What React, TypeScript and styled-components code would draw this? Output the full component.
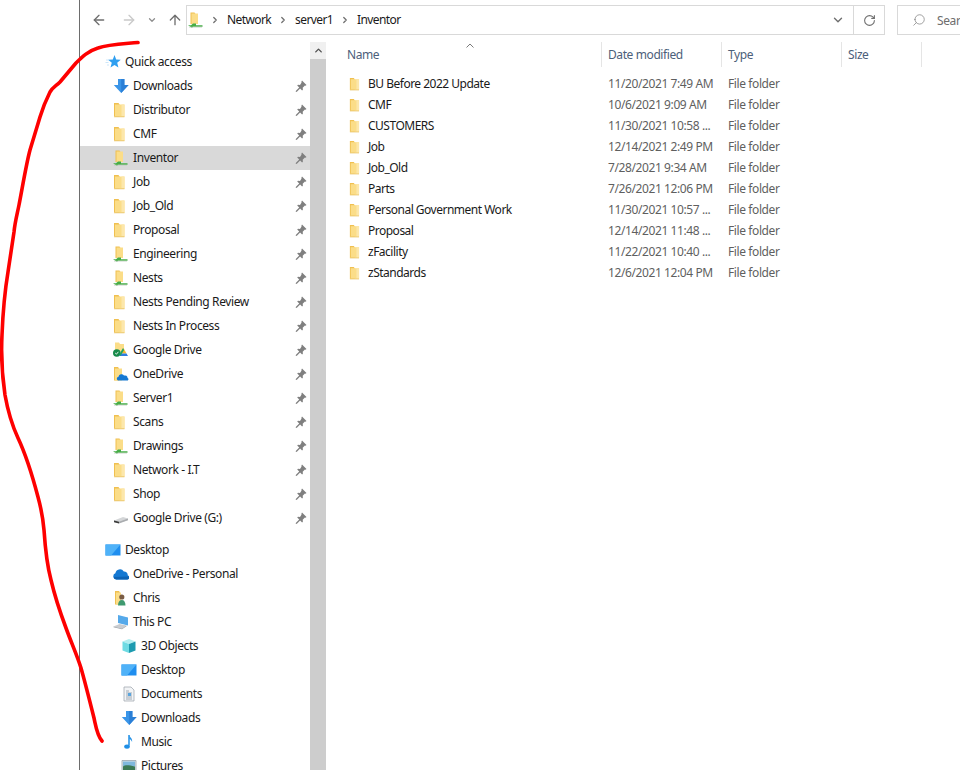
import React from "react";
import styled, { createGlobalStyle } from "styled-components";
import { ArrowLeft, ArrowRight, ArrowUp, ChevronDown, ChevronRight, ChevronUp, RotateCw, Search } from "lucide-react";

const GlobalStyle = createGlobalStyle`
  html, body {
    margin: 0;
    padding: 0;
    background: #fff;
    overflow: hidden;
  }
  * {
    box-sizing: border-box;
  }
`;

type IconKind =
  | "folder"
  | "netfolder"
  | "star"
  | "download"
  | "gdrive"
  | "onedrivefolder"
  | "drive"
  | "desktop"
  | "cloud"
  | "user"
  | "pc"
  | "cube"
  | "doc"
  | "music"
  | "picture";

interface NavItem {
  label: string;
  icon: IconKind;
  level: number;
  pinned?: boolean;
  selected?: boolean;
  gapBefore?: boolean;
}

const navItems: NavItem[] = [
  { label: "Quick access", icon: "star", level: 0 },
  { label: "Downloads", icon: "download", level: 1, pinned: true },
  { label: "Distributor", icon: "folder", level: 1, pinned: true },
  { label: "CMF", icon: "folder", level: 1, pinned: true },
  { label: "Inventor", icon: "netfolder", level: 1, pinned: true, selected: true },
  { label: "Job", icon: "folder", level: 1, pinned: true },
  { label: "Job_Old", icon: "folder", level: 1, pinned: true },
  { label: "Proposal", icon: "folder", level: 1, pinned: true },
  { label: "Engineering", icon: "netfolder", level: 1, pinned: true },
  { label: "Nests", icon: "netfolder", level: 1, pinned: true },
  { label: "Nests Pending Review", icon: "folder", level: 1, pinned: true },
  { label: "Nests In Process", icon: "folder", level: 1, pinned: true },
  { label: "Google Drive", icon: "gdrive", level: 1, pinned: true },
  { label: "OneDrive", icon: "onedrivefolder", level: 1, pinned: true },
  { label: "Server1", icon: "netfolder", level: 1, pinned: true },
  { label: "Scans", icon: "folder", level: 1, pinned: true },
  { label: "Drawings", icon: "netfolder", level: 1, pinned: true },
  { label: "Network - I.T", icon: "folder", level: 1, pinned: true },
  { label: "Shop", icon: "folder", level: 1, pinned: true },
  { label: "Google Drive (G:)", icon: "drive", level: 1, pinned: true },
  { label: "Desktop", icon: "desktop", level: 0, gapBefore: true },
  { label: "OneDrive - Personal", icon: "cloud", level: 1 },
  { label: "Chris", icon: "user", level: 1 },
  { label: "This PC", icon: "pc", level: 1 },
  { label: "3D Objects", icon: "cube", level: 2 },
  { label: "Desktop", icon: "desktop", level: 2 },
  { label: "Documents", icon: "doc", level: 2 },
  { label: "Downloads", icon: "download", level: 2 },
  { label: "Music", icon: "music", level: 2 },
  { label: "Pictures", icon: "picture", level: 2 },
];

const files = [
  { name: "BU Before 2022 Update", date: "11/20/2021 7:49 AM" },
  { name: "CMF", date: "10/6/2021 9:09 AM" },
  { name: "CUSTOMERS", date: "11/30/2021 10:58 ..." },
  { name: "Job", date: "12/14/2021 2:49 PM" },
  { name: "Job_Old", date: "7/28/2021 9:34 AM" },
  { name: "Parts", date: "7/26/2021 12:06 PM" },
  { name: "Personal Government Work", date: "11/30/2021 10:57 ..." },
  { name: "Proposal", date: "12/14/2021 11:48 ..." },
  { name: "zFacility", date: "11/22/2021 10:40 ..." },
  { name: "zStandards", date: "12/6/2021 12:04 PM" },
];

function FolderShape() {
  return (
    <>
      <path d="M1 1h4.5l1 1.5v12H1z" fill="#f0c050" />
      <path d="M2 2.5h9.5v12.2H2z" fill="#fbdd88" />
      <path d="M8.5 2.5h3v12.2h-3z" fill="#fce7ab" />
      <path d="M1 14.5h10.5v.7H1z" fill="#e4b94f" />
    </>
  );
}

function NavIcon({ kind }: { kind: IconKind }) {
  switch (kind) {
    case "folder":
      return (
        <IconSvg viewBox="0 0 16 16">
          <FolderShape />
        </IconSvg>
      );
    case "netfolder":
      return (
        <IconSvg viewBox="0 0 16 16">
          <path d="M2.5 0.5h4l1 1.5v10h-5z" fill="#f0c050" />
          <path d="M3.5 1.5h6.5v10.5H3.5z" fill="#fbdd88" />
          <path d="M0 13.2h3l2-1.7h3v1.7h6.5v1.6H5l-1 1z" fill="#45ad46" />
          <path d="M1 14.8h13v.6H1z" fill="#b9c4b9" />
        </IconSvg>
      );
    case "star":
      return (
        <IconSvg viewBox="0 0 16 16">
          <path d="M9.5 1l1.7 4.6 4.6.2-3.6 3 1.2 4.7-3.9-2.6-4 2.6 1.3-4.7-3.6-3 4.6-.2z" fill="#2f9ff0" />
          <path d="M1 6h3M0.5 8.5h3M2 11h2" stroke="#bfe0f7" strokeWidth="0.8" />
        </IconSvg>
      );
    case "download":
      return (
        <IconSvg viewBox="0 0 16 16">
          <path d="M5 1h6.4v6h4.2L8.2 15 0.8 7H5z" fill="#3a95e8" />
          <path d="M8.2 1h3.2v6h4.2L8.2 15z" fill="#2b7fd6" />
        </IconSvg>
      );
    case "gdrive":
      return (
        <IconSvg viewBox="0 0 16 16">
          <path d="M2 0.5h4l1 1.5h4v8H2z" fill="#fbdd88" />
          <circle cx="3.8" cy="11" r="3.8" fill="#178a4a" />
          <path d="M2.2 11l1.2 1.2 2-2.4" stroke="#fff" strokeWidth="0.9" fill="none" />
          <path d="M10.5 6l3 5.5H7.5z" fill="#f6b92a" />
          <path d="M7.5 11.5h6l1.5 2.5H6.5z" fill="#2f7de0" />
          <path d="M10 6L6.5 12l1 2 3.5-6z" fill="#1fa463" />
        </IconSvg>
      );
    case "onedrivefolder":
      return (
        <IconSvg viewBox="0 0 16 16">
          <path d="M1 1h4l1 1.5v12H1z" fill="#f0c050" />
          <path d="M2 2.5h7v12H2z" fill="#fbdd88" />
          <path d="M5 14.5a2 2 0 0 1 .5-3.8A3 3 0 0 1 11 9.6a2.6 2.6 0 0 1 3.6 2.4 1.6 1.6 0 0 1 .2 2.5z" fill="#1478d2" />
        </IconSvg>
      );
    case "drive":
      return (
        <IconSvg viewBox="0 0 16 16">
          <path d="M1 10.5l9-3.5 5 1.5v1.5l-9 3-5-1z" fill="#d4d6d8" />
          <path d="M1 10.5l5 1.2v1.8l-5-1.2z" fill="#3a3a3a" />
          <path d="M6 11.7l9-3.2v1.8l-9 3.2z" fill="#a9acaf" />
        </IconSvg>
      );
    case "desktop":
      return (
        <IconSvg viewBox="0 0 16 16">
          <path d="M0.5 2.5h15v11h-15z" fill="#1f8eef" />
          <path d="M0.5 2.5h15L6 13.5H0.5z" fill="#4fb2f8" />
        </IconSvg>
      );
    case "cloud":
      return (
        <IconSvg viewBox="0 0 16 16">
          <path d="M3.2 13.5A3.2 3.2 0 0 1 2.4 7.3 4.6 4.6 0 0 1 10.8 5.4 3.8 3.8 0 0 1 14.8 9.4 2.1 2.1 0 0 1 14.4 13.5z" fill="#1478d2" />
          <path d="M0.6 11a3.2 3.2 0 0 0 2.6 2.5h11.2a2.1 2.1 0 0 0 1.5-2.9z" fill="#0c62b4" />
        </IconSvg>
      );
    case "user":
      return (
        <IconSvg viewBox="0 0 16 16">
          <path d="M2 1h4l1 1.5v12H2z" fill="#f0c050" />
          <path d="M3 2.5h5v12H3z" fill="#fbdd88" />
          <circle cx="8.8" cy="7" r="2.6" fill="#7a5c44" />
          <path d="M5 15.5c0-3.5 1.5-5.5 3.8-5.5s3.7 2 3.7 5.5z" fill="#3f9a70" />
        </IconSvg>
      );
    case "pc":
      return (
        <IconSvg viewBox="0 0 16 16">
          <path d="M5 1l10 2.5v8L5 9z" fill="#55a9ea" />
          <path d="M0.5 12.5l6-2.5 7 1.5-4.5 3z" fill="#c9ccd0" />
          <path d="M0.5 12.5l8.5 2 4.5-3v.7l-4.5 3-8.5-2z" fill="#9aa0a6" />
        </IconSvg>
      );
    case "cube":
      return (
        <IconSvg viewBox="0 0 16 16">
          <path d="M8 1l6.5 2.5L8 6 1.5 3.5z" fill="#b2eef0" />
          <path d="M1.5 3.5L8 6v9l-6.5-2.5z" fill="#6fdbe3" />
          <path d="M14.5 3.5L8 6v9l6.5-2.5z" fill="#1d9bb0" />
        </IconSvg>
      );
    case "doc":
      return (
        <IconSvg viewBox="0 0 16 16">
          <path d="M3 1h7l3 3v11H3z" fill="#f2f4f6" stroke="#a5abb2" strokeWidth="0.8" />
          <path d="M5 5h3M5 7h6M5 9h6M5 11h6M5 13h6" stroke="#8a97a5" strokeWidth="0.8" />
          <path d="M7 7h3v3H7z" fill="#5aa5dd" />
        </IconSvg>
      );
    case "music":
      return (
        <IconSvg viewBox="0 0 16 16">
          <path d="M8 1v10.5" stroke="#1f8fe6" strokeWidth="1.5" />
          <ellipse cx="6" cy="12.6" rx="2.8" ry="2.2" fill="#1f8fe6" />
          <path d="M8.4 1c.4 2.6 3.3 3.3 2.7 7-.7-2-1.7-2.6-2.7-3z" fill="#1f8fe6" />
        </IconSvg>
      );
    case "picture":
      return (
        <IconSvg viewBox="0 0 16 16">
          <path d="M1 2.5h14v11H1z" fill="#dfe6ea" stroke="#98a3ac" strokeWidth="0.8" />
          <path d="M2 3.5h12v5H2z" fill="#7fb8dd" />
          <path d="M2 8.5c3-2 6-1 12 0v4H2z" fill="#3c7a55" />
        </IconSvg>
      );
  }
}

function PinIcon() {
  return (
    <PinSvg viewBox="0 0 12 12">
      <path d="M7 0.5l4.5 4.5-1 .8-.6-.3-2.2 2.2.2 2-.8.8-2-2-3.2 3.2-1.2.3.3-1.2 3.2-3.2-2-2 .8-.8 2 .2L6.6 2.6 6.3 1.9z" fill="#7f7f7f" />
    </PinSvg>
  );
}

export default function App() {
  return (
    <>
      <GlobalStyle />
      <Page>
        <Window>
          <Toolbar>
            <BackButton>
              <ArrowLeft size={16} strokeWidth={2} />
            </BackButton>
            <ForwardButton>
              <ArrowRight size={16} strokeWidth={2} />
            </ForwardButton>
            <RecentButton>
              <ChevronDown size={10} strokeWidth={3} />
            </RecentButton>
            <UpButton>
              <ArrowUp size={16} strokeWidth={2} />
            </UpButton>
            <AddressBar>
              <AddressFolder>
                <NavIcon kind="netfolder" />
              </AddressFolder>
              <Crumbs>
                <ChevronRight size={10} strokeWidth={3} />
                <Crumb>Network</Crumb>
                <ChevronRight size={10} strokeWidth={3} />
                <Crumb>server1</Crumb>
                <ChevronRight size={10} strokeWidth={3} />
                <Crumb>Inventor</Crumb>
              </Crumbs>
              <AddressChevron>
                <ChevronDown size={14} strokeWidth={2.4} />
              </AddressChevron>
              <RefreshButton>
                <RotateCw size={13} strokeWidth={2} />
              </RefreshButton>
            </AddressBar>
            <SearchBox>
              <MirroredSearch size={14} strokeWidth={1.2} />
              <SearchText>Search Inventor</SearchText>
            </SearchBox>
          </Toolbar>
          <Body>
            <NavPane>
              {navItems.map((item, i) => (
                <NavRow key={i} $level={item.level} $selected={item.selected} $gap={item.gapBefore}>
                  <NavIcon kind={item.icon} />
                  <NavLabel>{item.label}</NavLabel>
                  {item.pinned && <PinIcon />}
                </NavRow>
              ))}
            </NavPane>
            <Scrollbar>
              <ScrollButton>
                <ChevronUp size={11} strokeWidth={3} />
              </ScrollButton>
              <ScrollThumb />
            </Scrollbar>
            <Content>
              <HeaderRow>
                <HeaderCell>
                  Name
                  <SortCaret viewBox="0 0 8 5">
                    <path d="M0.5 4.5L4 1l3.5 3.5" fill="none" stroke="#7a7a7a" />
                  </SortCaret>
                </HeaderCell>
                <HeaderCell>Date modified</HeaderCell>
                <HeaderCell>Type</HeaderCell>
                <HeaderCell>Size</HeaderCell>
              </HeaderRow>
              <FileList>
                {files.map((file) => (
                  <FileRow key={file.name}>
                    <NameCell>
                      <FileFolder viewBox="0 0 16 16">
                        <FolderShape />
                      </FileFolder>
                      {file.name}
                    </NameCell>
                    <MetaCell>{file.date}</MetaCell>
                    <MetaCell>File folder</MetaCell>
                  </FileRow>
                ))}
              </FileList>
            </Content>
          </Body>
        </Window>
        <Scribble viewBox="0 0 960 770">
          <path
            d="M138 42.5C122 44 108 44.5 98 48C88 51 82 57 76 63C70 70 66 75 60 82C56 86 53 87 50 92C46 100 43 107 40 117C36 130 33 140 30 150C26 165 22 190 19 205C17 215 15 222 14 232C12 245 10 258 8 272C5 290 3 310 2 335C1 355 2 375 5 395C8 412 12 425 18 438C26 455 33 478 38 497C41 508 43 518 44 530C45 545 47 565 51 580C55 597 60 612 66 628C71 642 77 655 81 668C85 682 90 702 94 718C96 727 97 735 102 741"
            fill="none"
            stroke="#fe0000"
            strokeWidth="3.6"
            strokeLinecap="round"
            strokeLinejoin="round"
          />
        </Scribble>
      </Page>
    </>
  );
}

const uiFont = `"Noto Sans", "Open Sans", sans-serif`;

const Page = styled.div`
  position: relative;
  width: 960px;
  height: 770px;
  overflow: hidden;
  background: #fff;
  padding-left: 79px;
  font-family: ${uiFont};
  font-size: 12px;
  letter-spacing: -0.4px;
`;

const Window = styled.div`
  width: 900px;
  height: 770px;
  border-left: 1px solid #6d6d6d;
  display: flex;
  flex-direction: column;
`;

const Toolbar = styled.div`
  height: 42px;
  flex: none;
  display: flex;
  align-items: flex-start;
  padding-top: 5px;
`;

const NavButton = styled.div`
  height: 30px;
  display: flex;
  align-items: center;
  justify-content: center;
  flex: none;
`;

const BackButton = styled(NavButton)`
  width: 38px;
  color: #6f6f6f;
`;

const ForwardButton = styled(NavButton)`
  width: 22px;
  color: #c9c9c9;
`;

const RecentButton = styled(NavButton)`
  width: 23px;
  color: #8e8e8e;
`;

const UpButton = styled(NavButton)`
  width: 23px;
  color: #6f6f6f;
`;

const AddressBar = styled.div`
  width: 699px;
  height: 30px;
  flex: none;
  border: 1px solid #d9d9d9;
  display: flex;
  align-items: center;
  padding-left: 1px;
`;

const AddressFolder = styled.div`
  width: 18px;
  height: 16px;
  flex: none;
`;

const Crumbs = styled.div`
  display: flex;
  align-items: center;
  gap: 7px;
  flex: 1;
  color: #1a1a1a;
  padding-left: 4px;
  letter-spacing: -0.6px;
  svg {
    color: #6f6f6f;
  }
`;

const Crumb = styled.span`
  line-height: 16px;
`;

const AddressChevron = styled.div`
  width: 30px;
  display: flex;
  justify-content: center;
  color: #6f6f6f;
`;

const RefreshButton = styled.div`
  width: 31px;
  height: 28px;
  border-left: 1px solid #d9d9d9;
  display: flex;
  align-items: center;
  justify-content: center;
  color: #6f6f6f;
`;

const SearchBox = styled.div`
  width: 200px;
  height: 30px;
  flex: none;
  margin-left: 12px;
  border: 1px solid #d9d9d9;
  display: flex;
  align-items: center;
  padding-left: 14px;
  gap: 11px;
`;

const MirroredSearch = styled(Search)`
  transform: scaleX(-1);
  color: #7a7a7a;
`;

const SearchText = styled.span`
  color: #6d6d6d;
  white-space: nowrap;
`;

const Body = styled.div`
  flex: 1;
  min-height: 0;
  display: flex;
  overflow: hidden;
`;

const NavPane = styled.div`
  width: 230px;
  flex: none;
  padding-top: 8px;
`;

const NavRow = styled.div<{ $level: number; $selected?: boolean; $gap?: boolean }>`
  height: 24px;
  display: flex;
  align-items: center;
  gap: 4px;
  padding-left: ${(p) => 25 + p.$level * 8}px;
  padding-right: 3px;
  margin-top: ${(p) => (p.$gap ? 8 : 0)}px;
  background: ${(p) => (p.$selected ? "#d9d9d9" : "transparent")};
`;

const IconSvg = styled.svg`
  width: 16px;
  height: 16px;
  flex: none;
  display: block;
`;

const NavLabel = styled.span`
  flex: 1;
  color: #1a1a1a;
  white-space: nowrap;
  margin-bottom: 2px;
`;

const PinSvg = styled.svg`
  width: 12px;
  height: 12px;
  flex: none;
`;

const Scrollbar = styled.div`
  width: 16px;
  flex: none;
  display: flex;
  flex-direction: column;
  background: #f0f0f0;
`;

const ScrollButton = styled.div`
  height: 17px;
  flex: none;
  display: flex;
  align-items: center;
  justify-content: center;
  color: #505050;
`;

const ScrollThumb = styled.div`
  flex: 1;
  background: #cdcdcd;
`;

const Content = styled.div`
  flex: 1;
  padding-left: 15px;
  display: flex;
  flex-direction: column;
`;

const HeaderRow = styled.div`
  height: 25px;
  display: grid;
  grid-template-columns: 261px 120px 120px 80px;
`;

const HeaderCell = styled.div`
  position: relative;
  display: flex;
  align-items: center;
  padding-left: 6px;
  color: #4c607a;
  border-right: 1px solid #e5e5e5;
`;

const SortCaret = styled.svg`
  position: absolute;
  left: 125px;
  top: 1px;
  width: 8px;
  height: 5px;
`;

const FileList = styled.div`
  padding-top: 6px;
`;

const FileRow = styled.div`
  height: 21px;
  display: grid;
  grid-template-columns: 261px 120px 120px;
  align-items: center;
`;

const NameCell = styled.div`
  display: flex;
  align-items: center;
  gap: 5px;
  padding-left: 8px;
  color: #1a1a1a;
  white-space: nowrap;
  letter-spacing: -0.5px;
`;

const FileFolder = styled(IconSvg)`
  width: 14px;
  height: 14px;
`;

const MetaCell = styled.div`
  padding-left: 6px;
  color: #5f5f5f;
  white-space: nowrap;
`;

const Scribble = styled.svg`
  position: absolute;
  inset: 0;
  width: 960px;
  height: 770px;
  pointer-events: none;
`;
